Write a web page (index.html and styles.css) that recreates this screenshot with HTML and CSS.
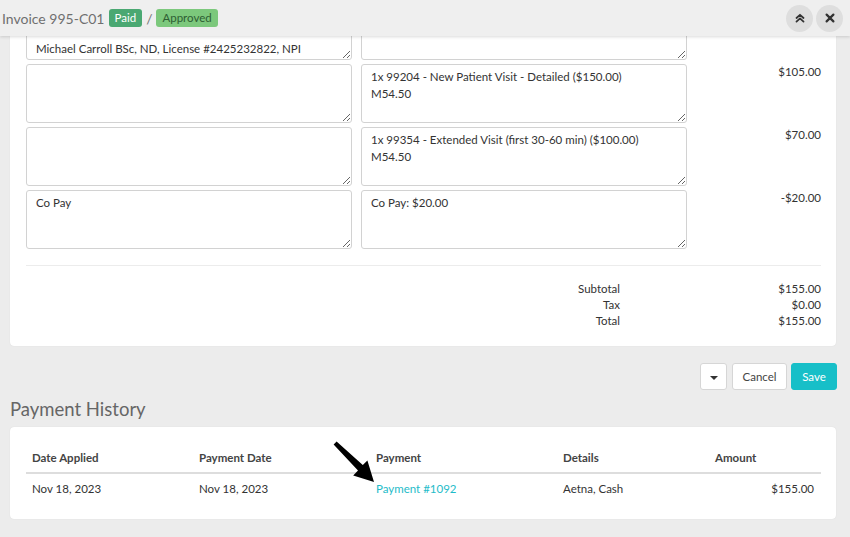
FILE: index.html
```
<!DOCTYPE html>
<html lang="en">
<head>
  <meta charset="UTF-8">
  <meta name="viewport" content="width=device-width, initial-scale=1.0">
  <title>Invoice 995-C01</title>
  <link rel="stylesheet" href="styles.css">
</head>
<body>

  <div class="modal">
    <!-- Barre de titre fixe -->
    <header class="modal-header">
      <div class="title">
        <span class="title-text">Invoice 995-C01</span>
        <span class="badge badge-paid">Paid</span>
        <span class="slash">/</span>
        <span class="badge badge-approved">Approved</span>
      </div>
      <div class="header-actions">
        <button class="round-btn" title="Collapse">
          <svg width="12" height="12" viewBox="0 0 12 12"><path d="M2.5 6 L6 2.8 L9.5 6 M2.5 9.6 L6 6.4 L9.5 9.6" fill="none" stroke="#333" stroke-width="1.8" stroke-linecap="round" stroke-linejoin="round"/></svg>
        </button>
        <button class="round-btn" title="Close">
          <svg width="12" height="12" viewBox="0 0 12 12"><path d="M2.6 2.6 L9.4 9.4 M9.4 2.6 L2.6 9.4" fill="none" stroke="#333" stroke-width="2.2" stroke-linecap="round"/></svg>
        </button>
      </div>
    </header>

    <main class="modal-body">
      <!-- Lignes de la facture -->
      <section class="card invoice-card">
        <div class="lines">
          <textarea class="line-input">Rendering provider:

Michael Carroll BSc, ND, License #2425232822, NPI #0709977040, TIN #906409097</textarea>
          <textarea class="line-input"></textarea>
          <div class="line-amount"></div>

          <textarea class="line-input"></textarea>
          <textarea class="line-input">1x 99204 - New Patient Visit - Detailed ($150.00)
M54.50</textarea>
          <div class="line-amount">$105.00</div>

          <textarea class="line-input"></textarea>
          <textarea class="line-input">1x 99354 - Extended Visit (first 30-60 min) ($100.00)
M54.50</textarea>
          <div class="line-amount">$70.00</div>

          <textarea class="line-input">Co Pay</textarea>
          <textarea class="line-input">Co Pay: $20.00</textarea>
          <div class="line-amount">-$20.00</div>
        </div>

        <hr class="divider">

        <div class="totals">
          <span class="total-label">Subtotal</span><span class="total-value">$155.00</span>
          <span class="total-label">Tax</span><span class="total-value">$0.00</span>
          <span class="total-label">Total</span><span class="total-value">$155.00</span>
        </div>
      </section>

      <div class="form-actions">
        <button class="btn btn-caret"><span class="caret"></span></button>
        <button class="btn btn-cancel">Cancel</button>
        <button class="btn btn-primary">Save</button>
      </div>

      <h2 class="section-title">Payment History</h2>

      <!-- Historique des paiements -->
      <section class="card history-card">
        <table class="history">
          <colgroup>
            <col class="c1"><col class="c2"><col class="c3"><col class="c4"><col class="c5">
          </colgroup>
          <thead>
            <tr>
              <th>Date Applied</th>
              <th>Payment Date</th>
              <th>Payment</th>
              <th>Details</th>
              <th>Amount</th>
            </tr>
          </thead>
          <tbody>
            <tr>
              <td>Nov 18, 2023</td>
              <td>Nov 18, 2023</td>
              <td><a href="#" class="link">Payment #1092</a></td>
              <td>Aetna, Cash</td>
              <td class="num">$155.00</td>
            </tr>
          </tbody>
        </table>
        <svg class="pointer-arrow" width="46" height="46" viewBox="0 0 46 46">
          <polygon points="3.6,1.4 29.8,25 34.4,20.4 41,42 20.2,35.4 25,30.6 0.6,4.4" fill="#000"/>
        </svg>
      </section>
    </main>
  </div>

</body>
</html>
```

FILE: styles.css
```
body {
  margin: 0;
  padding: 0;
  background-color: #ececec;
  font-family: Lato, "Open Sans", Arial, sans-serif;
  color: #333;
  overflow: hidden;
}
.modal {
  position: relative;
  width: 850px;
  height: 537px;
  overflow: hidden;
}
.modal-header {
  position: absolute;
  top: 0;
  left: 0;
  right: 0;
  z-index: 2;
  height: 36px;
  display: flex;
  align-items: center;
  justify-content: space-between;
  padding: 0 7px 0 2px;
  background-color: #efefef;
  box-shadow: 0 1px 3px rgba(0, 0, 0, 0.15);
}
.title {
  display: flex;
  align-items: center;
  gap: 4px;
}
.title-text {
  font-size: 14px;
  color: #6f6f6f;
}
.badge {
  display: inline-block;
  padding: 2px 6px;
  border-radius: 3px;
  font-size: 11.5px;
  line-height: 14px;
  color: #fff;
}
.badge-paid {
  background-color: #4aa872;
}
.badge-approved {
  background-color: #7cc87c;
  color: #2e5e33;
}
.slash {
  color: #777;
  font-size: 14px;
}
.header-actions {
  display: flex;
  gap: 3px;
}
.round-btn {
  width: 27px;
  height: 27px;
  border: none;
  border-radius: 50%;
  background-color: #dedede;
  padding: 0;
  display: flex;
  align-items: center;
  justify-content: center;
}
.modal-body {
  margin-top: -15px;
  padding: 0 14px 0 10px;
}
.card {
  background-color: #fff;
  border-radius: 4px;
  box-shadow: 0 0 1px rgba(0, 0, 0, 0.15);
}
.invoice-card {
  padding: 16px 15px 17px 16px;
}
.lines {
  display: grid;
  grid-template-columns: 326px 326px 1fr;
  column-gap: 9px;
  row-gap: 4px;
}
.line-input {
  box-sizing: border-box;
  height: 59px;
  margin: 0;
  padding: 3px 9px;
  border: 1px solid #d2d2d2;
  border-radius: 3px;
  font-family: Lato, "Open Sans", Arial, sans-serif;
  font-size: 11.5px;
  line-height: 17px;
  color: #333;
  overflow: hidden;
}
.line-input:first-child {
  padding-top: 4px;
}
.line-amount {
  text-align: right;
  font-size: 11.5px;
  line-height: 16px;
}
.divider {
  border: none;
  border-top: 1px solid #ececec;
  margin: 16px 0 15px 0;
}
.totals {
  display: grid;
  grid-template-columns: 1fr 201px;
  font-size: 11.5px;
  line-height: 16px;
}
.total-label,
.total-value {
  text-align: right;
}
.form-actions {
  display: flex;
  justify-content: flex-end;
  gap: 4px;
  margin-top: 17px;
  margin-right: -1px;
}
.btn {
  height: 27px;
  padding: 0;
  border: 1px solid #d6d6d6;
  border-radius: 3px;
  background-color: #fff;
  font-family: Lato, "Open Sans", Arial, sans-serif;
  font-size: 11.5px;
  color: #444;
}
.btn-caret {
  width: 27px;
  margin-right: 1px;
}
.btn-cancel {
  width: 55px;
}
.caret {
  display: inline-block;
  width: 0;
  height: 0;
  border-left: 4px solid transparent;
  border-right: 4px solid transparent;
  border-top: 4px solid #333;
  vertical-align: middle;
}
.btn-primary {
  width: 46px;
  background-color: #17bfc8;
  border-color: #17bfc8;
  color: #fff;
}
.section-title {
  margin: 8px 0 7px;
  font-size: 18.5px;
  line-height: 22px;
  font-weight: normal;
  color: #666;
}
.history-card {
  position: relative;
  padding: 16px 15px 16px 16px;
}
.history {
  width: 100%;
  border-collapse: collapse;
  font-size: 11.5px;
}
.history col.c1 { width: 167px; }
.history col.c2 { width: 177px; }
.history col.c3 { width: 187px; }
.history col.c4 { width: 152px; }
.history th {
  text-align: left;
  font-weight: bold;
  font-size: 11.5px;
  color: #444;
  padding: 7px 6px;
  height: 15px;
  border-bottom: 2px solid #dddddd;
}
.history td {
  padding: 7px 6px 8px;
  height: 14px;
  color: #333;
}
.history td.num {
  text-align: right;
  padding-right: 7px;
}
.link {
  color: #1fbcc9;
  text-decoration: none;
}
.pointer-arrow {
  position: absolute;
  left: 323px;
  top: 13px;
}
```
